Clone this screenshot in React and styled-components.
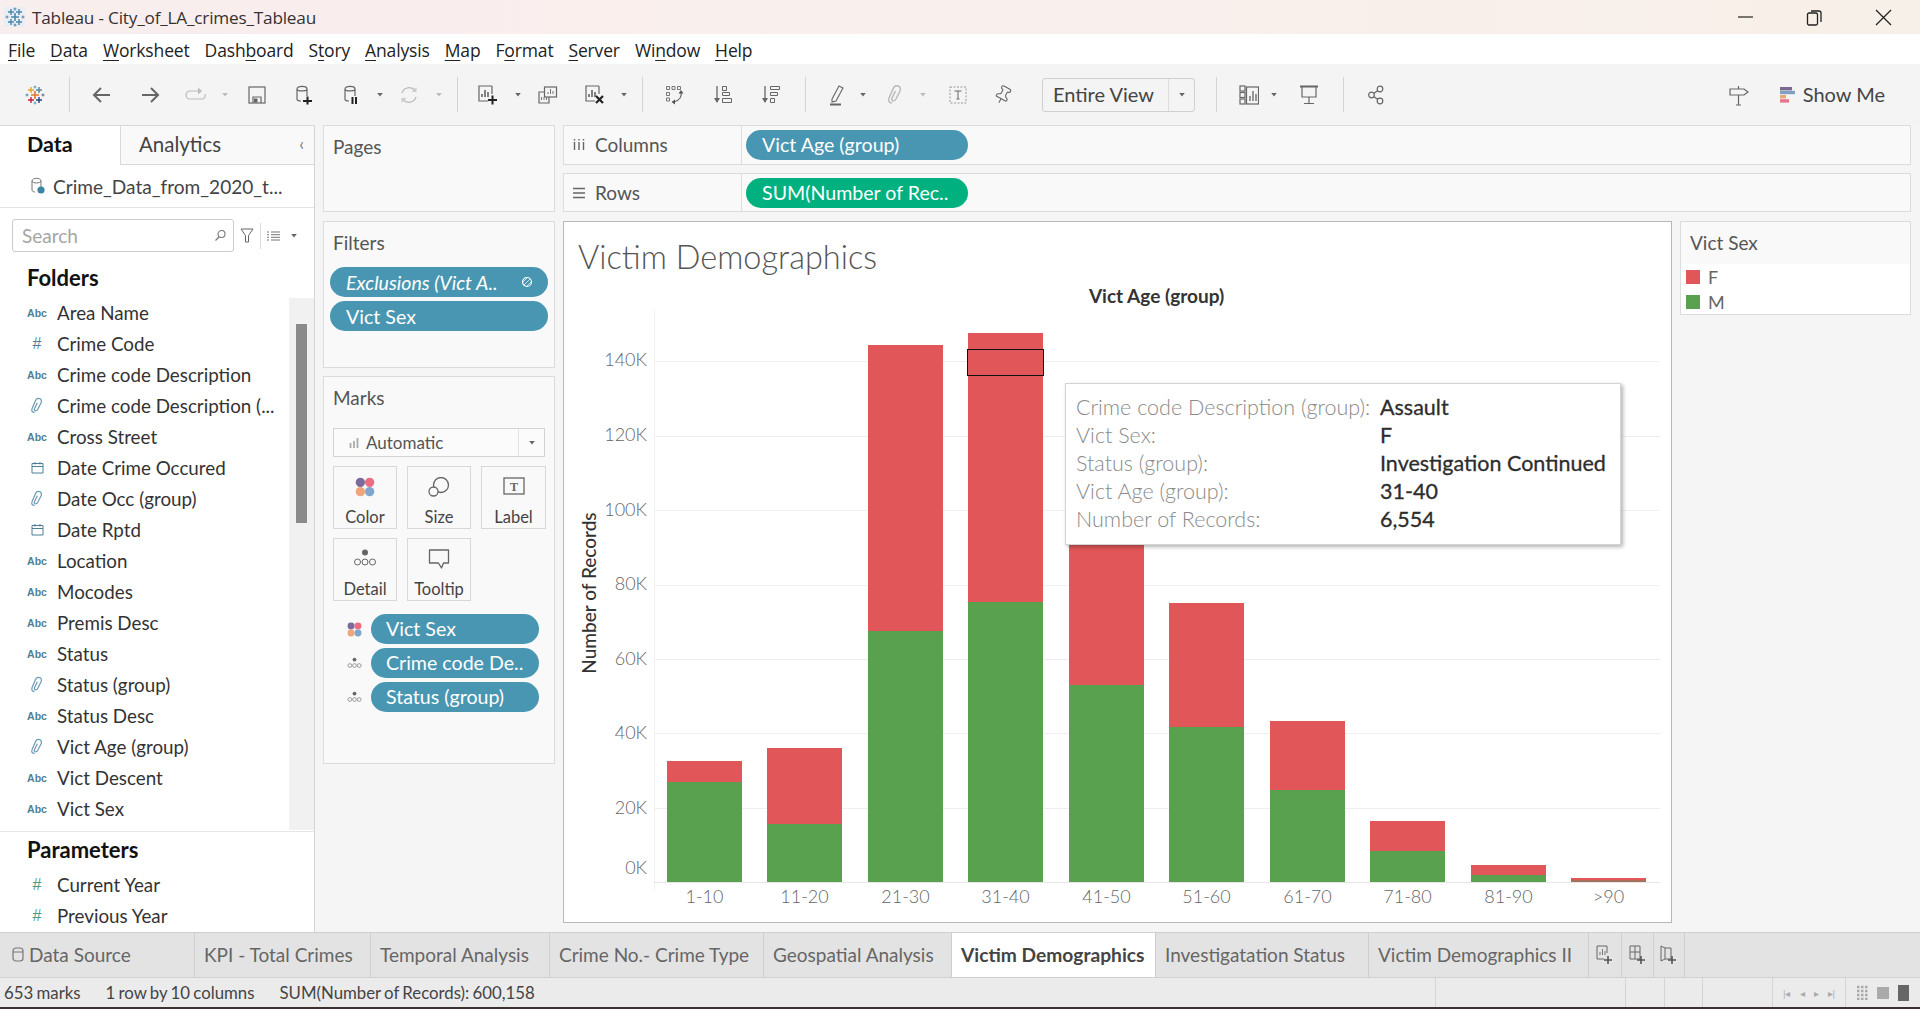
import styled, { createGlobalStyle } from "styled-components"
import { Pin } from "lucide-react"

const Global = createGlobalStyle`
    html, body { margin: 0; padding: 0; background: #f5f5f5; }
    * { box-sizing: border-box; }
    body { font-family: "Lato", "Noto Sans", sans-serif; overflow: hidden; }
`

const Page = styled.div`
    width: 1920px;
    height: 1009px;
    display: flex;
    flex-direction: column;
    overflow: hidden;
    position: relative;
`

/* title + menu */
const TitleBar = styled.div`
    height: 34px;
    display: flex;
    align-items: center;
    padding-left: 4px;
    background: linear-gradient(90deg, #f9eeee 0%, #f9efec 60%, #f7f0e8 100%);
    font-family: "Open Sans", sans-serif;
    font-size: 17.2px;
    color: #333;
`
const TitleText = styled.span`
    margin-left: 7px;
    letter-spacing: -0.2px;
`
const WindowButtons = styled.div`
    margin-left: auto;
    display: flex;
    padding-right: 28px;
    gap: 52px;
`
const MenuBar = styled.div`
    height: 30px;
    display: flex;
    align-items: center;
    gap: 15px;
    padding: 2px 0 0 8px;
    background: #fff;
    font-family: "Open Sans", sans-serif;
    font-size: 17.5px;
    letter-spacing: -0.15px;
    color: #222;
`
const MenuItem = styled.span`
    u { text-underline-offset: 3px; }
`

/* toolbar */
const Toolbar = styled.div`
    height: 61px;
    display: flex;
    align-items: center;
    background: #f4f4f4;
`
const ToolIcon = styled.div`
    width: 24px;
    height: 24px;
    flex: none;
    margin-left: ${p => p.$ml}px;
    display: flex;
    align-items: center;
    justify-content: center;
`
const Caret = styled.div`
    width: 8px;
    height: 4px;
    flex: none;
    margin-left: ${p => p.$ml}px;
    background: ${p => (p.$dim ? "#bbb" : "#666")};
    clip-path: polygon(10% 0, 90% 0, 50% 100%);
`
const ToolSep = styled.div`
    width: 1px;
    height: 35px;
    flex: none;
    margin-left: ${p => p.$ml}px;
    background: #d4d4d4;
`
const FitSelect = styled.div`
    width: 153px;
    height: 34px;
    flex: none;
    margin-left: ${p => p.$ml}px;
    border: 1px solid #d0d0d0;
    border-radius: 3px;
    display: flex;
    align-items: center;
    font-size: 20px;
    color: #444;
`
const FitLabel = styled.div`
    width: 126px;
    padding: 0 0 2px 10px;
    border-right: 1px solid #ddd;
    line-height: 30px;
`
const FitCaret = styled(Caret)`
    margin-left: 9px;
`
const ToolRight = styled.div`
    margin-left: auto;
    display: flex;
    align-items: center;
    padding-right: 35px;
`
const ShowMeMark = styled.div`
    margin-left: 31px;
    display: flex;
`
const ShowMeText = styled.span`
    margin-left: 8px;
    padding-bottom: 2px;
    font-size: 20px;
    color: #444;
`

/* workspace */
const Workspace = styled.div`
    height: 807px;
    display: flex;
    background: #f5f5f5;
`
const DataPane = styled.div`
    width: 315px;
    flex: none;
    background: #fff;
    border-right: 1px solid #d4d4d4;
    display: flex;
    flex-direction: column;
`
const PaneTabs = styled.div`
    height: 40px;
    display: flex;
    flex: none;
    border-top: 1px solid #d8d8d8;
`
const PaneTab = styled.div`
    width: ${p => p.$w}px;
    padding-left: ${p => p.$pad}px;
    line-height: 36px;
    font-size: ${p => (p.$active ? 21.5 : 20.5)}px;
    font-weight: ${p => (p.$active ? 700 : 400)};
    color: ${p => (p.$active ? "#111" : "#444")};
`
const AnalyticsTab = styled(PaneTab)`
    flex: 1;
    position: relative;
    background: #f9f9f9;
    border-left: 1px solid #d8d8d8;
    border-bottom: 1px solid #d8d8d8;
`
const Collapse = styled.span`
    position: absolute;
    right: 10px;
    top: 0;
    color: #777;
    font-size: 17px;
`
const SourceRow = styled.div`
    height: 43px;
    flex: none;
    display: flex;
    align-items: center;
    gap: 7px;
    padding-left: 31px;
    border-bottom: 1px solid #e4e4e4;
    font-size: 19.1px;
    color: #444;
`
const SearchRow = styled.div`
    height: 50px;
    flex: none;
    display: flex;
    align-items: flex-start;
    padding: 11px 0 0 12px;
`
const SearchBox = styled.div`
    width: 222px;
    height: 33px;
    border: 1px solid #ccc;
    border-radius: 3px;
    display: flex;
    align-items: center;
    justify-content: space-between;
    padding: 0 6px 0 9px;
    font-size: 19px;
    color: #a5a5a5;
`
const SearchTools = styled.div`
    display: flex;
    align-items: center;
    height: 33px;
    gap: 6px;
    padding-left: 6px;
`
const SearchDivider = styled.div`
    width: 1px;
    height: 26px;
    background: #ddd;
`
const SectionTitle = styled.div`
    height: ${p => p.$h}px;
    flex: none;
    padding-left: 27px;
    line-height: ${p => p.$lh}px;
    font-size: 22px;
    font-weight: 700;
    color: #111;
`
const FieldScroll = styled.div`
    height: 534px;
    flex: none;
    display: flex;
    border-bottom: 1px solid #e6e6e6;
`
const FieldList = styled.div`
    flex: 1;
`
const ScrollTrack = styled.div`
    width: 25px;
    height: 532px;
    background: #f1f1f1;
    padding: 26px 7px 0 7px;
`
const ScrollThumb = styled.div`
    width: 11px;
    height: 199px;
    background: #8a8a8a;
`
const FieldRow = styled.div`
    height: 31px;
    padding-bottom: 2px;
    display: flex;
    align-items: center;
    font-size: 18.8px;
    color: #333;
    white-space: nowrap;
`
const FieldIcon = styled.div`
    width: 57px;
    padding: 0 8px 0 25px;
    display: flex;
    justify-content: center;
    flex: none;
    color: ${p => (p.$param ? "#4a9a85" : "#4f7f97")};
    font-size: ${p => (p.$abc ? "10.5px" : "16px")};
    font-weight: ${p => (p.$abc ? 700 : 400)};
    font-family: "Liberation Sans", sans-serif;
`

/* shelf cards */
const CardColumn = styled.div`
    width: 232px;
    flex: none;
    margin-left: 8px;
    display: flex;
    flex-direction: column;
`
const Card = styled.div`
    height: ${p => p.$h}px;
    margin-bottom: ${p => p.$mb || 0}px;
    flex: none;
    background: #f9f9f9;
    border: 1px solid #dcdcdc;
    padding: 0 7px 0 9px;
`
const CardTitle = styled.div`
    font-size: 19px;
    color: #555;
    line-height: 24px;
    margin-top: ${p => p.$mt}px;
`
const PillStack = styled.div`
    display: flex;
    flex-direction: column;
    gap: 4px;
    margin: ${p => p.$m || "0"};
`
const Pill = styled.div`
    height: 30px;
    width: ${p => p.$w}px;
    flex: none;
    border-radius: 15px;
    background: ${p => p.$color || "#4996b2"};
    color: #fff;
    display: flex;
    align-items: center;
    justify-content: space-between;
    padding: 0 14px ${p => p.$drop ?? 2}px ${p => p.$pad || 16}px;
    font-size: 19.6px;
    font-style: ${p => (p.$italic ? "italic" : "normal")};
    white-space: nowrap;
`
const MarkType = styled.div`
    height: 29px;
    margin: 18px 0 9px 0;
    width: 212px;
    display: flex;
    align-items: center;
    background: #fbfbfb;
    border: 1px solid #d4d4d4;
    font-size: 17px;
    color: #555;
`
const MarkTypeLabel = styled.div`
    width: 185px;
    display: flex;
    align-items: center;
    gap: 5px;
    padding-left: 15px;
    height: 27px;
    border-right: 1px solid #e2e2e2;
`
const MarkTypeCaret = styled(Caret)`
    margin-left: 9px;
`
const MarkGrid = styled.div`
    display: grid;
    grid-template-columns: 64px 64px 65px;
    grid-auto-rows: 63px;
    column-gap: 10px;
    row-gap: 9px;
`
const MarkButton = styled.div`
    border: 1px solid #d8d8d8;
    display: flex;
    flex-direction: column;
    align-items: center;
    justify-content: space-between;
    padding: 10px 0 1px;
    font-size: 16.5px;
    color: #444;
    line-height: 20px;
`
const MarkField = styled.div`
    display: flex;
    align-items: center;
    padding-left: 13px;
    gap: 9px;
`
const MarkFieldIcon = styled.div`
    width: 16px;
    height: 16px;
    flex: none;
    display: flex;
    align-items: center;
    justify-content: center;
`

/* main */
const Main = styled.div`
    flex: 1;
    margin-left: 8px;
    margin-right: 9px;
    display: flex;
    flex-direction: column;
    gap: 8px;
    min-width: 0;
`
const Shelf = styled.div`
    height: ${p => p.$h}px;
    flex: none;
    display: flex;
    align-items: center;
    background: #f9f9f9;
    border: 1px solid #dcdcdc;
`
const ShelfLabel = styled.div`
    width: 178px;
    height: 100%;
    display: flex;
    align-items: center;
    gap: 10px;
    padding: 0 0 ${p => p.$drop ?? 2}px 9px;
    border-right: 1px solid #dcdcdc;
    font-size: 19px;
    color: #555;
    margin-right: 4px;
`
const ViewRow = styled.div`
    display: flex;
    align-items: flex-start;
    gap: 8px;
    margin-top: 1px;
`
const Viz = styled.div`
    width: 1109px;
    height: 702px;
    flex: none;
    background: #fff;
    border: 1px solid #b8b8b8;
    position: relative;
`
const VizTitle = styled.div`
    height: 58px;
    padding: 15px 0 0 14px;
    font-size: 32.5px;
    font-weight: 300;
    line-height: 40px;
    color: #555;
`
const AxisHeader = styled.div`
    height: 30px;
    padding: 1px 12px 0 90px;
    text-align: center;
    font-size: 19px;
    font-weight: 700;
    color: #333;
    line-height: 30px;
`
const ChartSvg = styled.svg`
    display: block;
    font-family: "Lato", sans-serif;
`
const Tip = styled.div`
    position: absolute;
    left: 501px;
    top: 161px;
    width: 556px;
    height: 162px;
    background: #fff;
    border: 1px solid #d4d4d4;
    box-shadow: 2px 2px 4px rgba(0, 0, 0, 0.3);
    padding: 9px 0 0 10px;
    display: grid;
    grid-template-columns: 304px 1fr;
    grid-auto-rows: 28px;
    align-items: center;
    font-size: 21.5px;
    white-space: nowrap;
`
const TipKey = styled.div`
    color: #8a8a8a;
    font-weight: 300;
`
const TipValue = styled.div`
    color: #2d2d2d;
    -webkit-text-stroke: 0.3px #2d2d2d;
`
const Legend = styled.div`
    flex: 1;
    height: 94px;
    background: #fff;
    border: 1px solid #dcdcdc;
`
const LegendHead = styled.div`
    height: 42px;
    padding-left: 9px;
    background: #f9f9f9;
    font-size: 19px;
    line-height: 42px;
    color: #555;
`
const LegendRow = styled.div`
    height: 25px;
    display: flex;
    align-items: center;
    padding-left: 5px;
    gap: 8px;
    font-size: 18px;
    color: #666;
`
const Swatch = styled.div`
    width: 14px;
    height: 14px;
    background: ${p => p.$color};
`

/* tabs & status */
const TabBar = styled.div`
    height: 46px;
    flex: none;
    display: flex;
    background: #e3e3e3;
    border-top: 1px solid #cfcfcf;
    border-bottom: 1px solid #d0d0d0;
`
const SheetTab = styled.div`
    width: ${p => p.$w}px;
    flex: none;
    display: flex;
    align-items: center;
    justify-content: ${p => (p.$icon ? "center" : "flex-start")};
    gap: 5px;
    padding-left: ${p => (p.$icon ? 0 : p.$pad || 9)}px;
    padding-bottom: ${p => (p.$icon ? 0 : 2)}px;
    border-right: 1px solid #cfcfcf;
    background: ${p => (p.$active ? "#fff" : "transparent")};
    color: ${p => (p.$active ? "#444" : "#666")};
    font-weight: ${p => (p.$active ? 700 : 400)};
    font-size: ${p => (p.$active ? 19.2 : 19)}px;
    white-space: nowrap;
`
const StatusBar = styled.div`
    height: 31px;
    flex: none;
    display: flex;
    background: #ebebeb;
    border-bottom: 2px solid #3b3230;
    font-size: 16.8px;
    word-spacing: -1px;
    color: #444;
`
const StatusText = styled.div`
    width: 1436px;
    display: flex;
    gap: 25px;
    align-items: center;
    padding-left: 4px;
    border-right: 1px solid #d4d4d4;
`
const StatusCell = styled.div`
    width: ${p => p.$w}px;
    flex: none;
    display: flex;
    align-items: center;
    justify-content: center;
    gap: 9px;
    border-right: ${p => (p.$last ? "none" : "1px solid #d4d4d4")};
`
const NavMark = styled.span`
    font-size: 10px;
    color: #aaa;
`
const ViewMark = styled.div`
    width: ${p => p.$s}px;
    height: ${p => p.$h}px;
    background: ${p => p.$color};
`
const TiltedPin = styled(Pin)`
    transform: rotate(28deg);
`

const ic = { fill: "none", stroke: "#666", strokeWidth: 1.2 }

const Cross = ({ x, y, s = 3, c, w = 1.4 }) => (
    <path d={`M${x - s} ${y}H${x + s}M${x} ${y - s}V${y + s}`} stroke={c} strokeWidth={w} fill="none" />
)

const TableauLogo = ({ mono }) => {
    const col = k => mono || k
    return (
        <svg width="20" height="20" viewBox="0 0 20 20">
            <Cross x={10} y={10} s={4} c={col("#e8762c")} w={1.6} />
            <Cross x={6} y={5} s={3} c={col("#e8a33c")} />
            <Cross x={14} y={5} s={3} c={col("#5b879b")} />
            <Cross x={6} y={15} s={3} c={col("#c72037")} />
            <Cross x={14} y={15} s={3} c={col("#1f447e")} />
            <Cross x={10} y={2} s={1.5} c={col("#7199a6")} w={1} />
            <Cross x={10} y={18} s={1.5} c={col("#7199a6")} w={1} />
            <Cross x={2} y={10} s={1.5} c={col("#59879b")} w={1} />
            <Cross x={18} y={10} s={1.5} c={col("#5b6591")} w={1} />
        </svg>
    )
}
const ArrowLeft = () => (
    <svg width="22" height="22" viewBox="0 0 22 22"><path d="M19 11H4M10 4l-7 7 7 7" fill="none" stroke="#666" strokeWidth="2" /></svg>
)
const ArrowRight = () => (
    <svg width="22" height="22" viewBox="0 0 22 22"><path d="M3 11h15M12 4l7 7-7 7" fill="none" stroke="#666" strokeWidth="2" /></svg>
)
const RunFlow = () => (
    <svg width="22" height="18" viewBox="0 0 22 18"><path d="M13 5H5a3.5 3.5 0 0 0 0 8h12a3.5 3.5 0 0 0 3-5" fill="none" stroke="#bbb" strokeWidth="1.2" /><path d="M13 1.5l4 3.5-4 3.5z" fill="#bbb" /></svg>
)
const Save = () => (
    <svg width="18" height="18" viewBox="0 0 18 18"><rect x="1" y="1" width="16" height="16" {...ic} /><path d="M5 17v-6h8v6" {...ic} /><rect x="6" y="12.5" width="3.5" height="4" fill="#666" /></svg>
)
const DbBase = () => (
    <path d="M2 4c0-3.6 10-3.6 10 0v7M2 4c0 2.6 10 2.6 10 0M2 4v10c0 1.6 2 2 4 2" {...ic} />
)
const DbPlus = () => (
    <svg width="18" height="20" viewBox="0 0 18 20"><DbBase /><path d="M8 16h9M12.5 11.5v8" stroke="#222" strokeWidth="2" /></svg>
)
const DbPause = () => (
    <svg width="18" height="20" viewBox="0 0 18 20"><DbBase /><path d="M9.5 12v7M13 12v7" stroke="#222" strokeWidth="2" /></svg>
)
const Refresh = () => (
    <svg width="20" height="20" viewBox="0 0 20 20"><path d="M3 8a7.5 7.5 0 0 1 13-2.5M17 12a7.5 7.5 0 0 1-13 2.5" fill="none" stroke="#bbb" strokeWidth="1.2" /><path d="M17.5 2v5h-5zM2.5 18v-5h5z" fill="#ccc" /></svg>
)
const NewSheet = () => (
    <svg width="20" height="20" viewBox="0 0 20 20"><path d="M14 1H1v15h9M14 1v8" {...ic} /><path d="M4 12V9M7 12V5M10 12V7" stroke="#666" strokeWidth="1.6" /><path d="M10 15h9M14.5 10.5v9" stroke="#222" strokeWidth="2" /></svg>
)
const DupSheet = () => (
    <svg width="20" height="18" viewBox="0 0 20 18"><rect x="6.5" y="1" width="12" height="10" {...ic} fill="#f4f4f4" /><path d="M6 6H1v11h10v-6" {...ic} /><path d="M10 8V6M12.5 8V3M15 8V5M3.5 14v-3M6 14v-3M8.5 14v-3" stroke="#777" strokeWidth="1" /></svg>
)
const ClearSheet = () => (
    <svg width="20" height="20" viewBox="0 0 20 20"><path d="M14 1H1v15h9M14 1v8" {...ic} /><path d="M4 12V9M7 12V5M10 12V7" stroke="#666" strokeWidth="1.6" /><path d="M11 11l7 7M18 11l-7 7" stroke="#222" strokeWidth="2.2" /></svg>
)
const Swap = () => (
    <svg width="20" height="20" viewBox="0 0 20 20"><path d="M1.5 1.5h3v3h-3zM7 1.5h3v3H7zM12.5 1.5h3v3h-3zM1.5 7.5h3v3h-3zM1.5 13h3v3h-3z" fill="none" stroke="#777" /><path d="M16 7c1 4-1 8-7 10" fill="none" stroke="#666" strokeWidth="1.2" /><path d="M13.5 8.5L16 5l2.5 3.5zM10 14.5L6.5 17l3.5 2.5z" fill="#555" /></svg>
)
const SortAsc = () => (
    <svg width="20" height="20" viewBox="0 0 20 20"><path d="M4 1v14" stroke="#666" strokeWidth="1.3" /><path d="M1 13h6l-3 5z" fill="#666" /><path d="M9.5 1.5h4v4h-4zM9.5 7.5h7v3h-7zM9.5 13.5h9v4h-9z" fill="none" stroke="#666" /></svg>
)
const SortDesc = () => (
    <svg width="20" height="20" viewBox="0 0 20 20"><path d="M4 1v14" stroke="#666" strokeWidth="1.3" /><path d="M1 13h6l-3 5z" fill="#666" /><path d="M9.5 1.5h9v3h-9zM9.5 7.5h7v3h-7zM9.5 13.5h4v4h-4z" fill="none" stroke="#666" /></svg>
)
const Highlighter = () => (
    <svg width="18" height="22" viewBox="0 0 18 22"><path d="M3 15L10 2l4 2-7 13-4 1z" fill="none" stroke="#666" strokeWidth="1.1" /><path d="M1 20.5h11" stroke="#666" strokeWidth="2" /></svg>
)
const Clip = ({ c = "#bbb", s = 22 }) => (
    <svg width={s} height={s} viewBox="0 0 22 22"><path d="M8 19c-3 0-4-2-3-5l4-9c1-3 3-3.5 5-3s3 2 2 5l-4 8c-1 2-2 2-3 2s-1.5-1.5-1-3l3.5-7" fill="none" stroke={c} strokeWidth="1.5" /></svg>
)
const TextBox = () => (
    <svg width="18" height="18" viewBox="0 0 18 18"><rect x="1" y="1" width="16" height="16" fill="none" stroke="#999" strokeDasharray="2 1.5" /><path d="M5.5 5h7M9 5v8M7.5 13h3" stroke="#666" fill="none" /></svg>
)
const ShowMeIcon = () => (
    <svg width="20" height="20" viewBox="0 0 20 20"><rect x="1" y="1" width="5" height="5" {...ic} /><rect x="1" y="7.5" width="5" height="5" {...ic} /><rect x="1" y="14" width="5" height="5" {...ic} /><rect x="7.5" y="2" width="12" height="17" {...ic} /><path d="M11 16v-5M14 16V6M17 16v-7" stroke="#666" strokeWidth="1.3" /></svg>
)
const Board = () => (
    <svg width="18" height="20" viewBox="0 0 18 20"><path d="M0 1.5h18" stroke="#666" strokeWidth="2" /><path d="M2 2v10h14V2M9 12v6M4 18.5h10" {...ic} /></svg>
)
const Share = () => (
    <svg width="16" height="20" viewBox="0 0 16 20"><circle cx="12" cy="4" r="2.8" {...ic} /><circle cx="3.5" cy="10" r="2.8" {...ic} /><circle cx="12" cy="16" r="2.8" {...ic} /><path d="M6 8.3l3.6-2.6M6 11.7l3.6 2.6" {...ic} /></svg>
)
const Signpost = () => (
    <svg width="20" height="22" viewBox="0 0 20 22"><path d="M1 5h14l4 3-4 3H1zM9.5 2v3M9.5 11v10M7 21h5" {...ic} /></svg>
)
const ShowMeBars = () => (
    <svg width="15" height="16" viewBox="0 0 15 16"><rect width="12" height="3.4" fill="#7a6a92" /><rect y="3.8" width="15" height="3.4" fill="#7f9fc4" /><rect y="8" width="6" height="3.4" fill="#e9a776" /><rect y="12.2" width="9" height="3.4" fill="#e9748a" /></svg>
)
const Minimize = () => <svg width="17" height="17" viewBox="0 0 17 17"><path d="M1 8h15" stroke="#222" strokeWidth="1.2" /></svg>
const Restore = () => <svg width="17" height="17" viewBox="0 0 17 17"><rect x="1.5" y="4" width="10" height="12" rx="1.5" fill="none" stroke="#222" strokeWidth="1.3" /><path d="M5 2h8a2 2 0 0 1 2 2v9" fill="none" stroke="#222" strokeWidth="1.3" /></svg>
const Close = () => <svg width="17" height="17" viewBox="0 0 17 17"><path d="M1 1l15 15M16 1L1 16" stroke="#222" strokeWidth="1.3" /></svg>
const Calendar = () => <svg width="13" height="13" viewBox="0 0 13 13"><path d="M1 2.5h11V12H1zM1 5.5h11M4 1v2.5M9 1v2.5" fill="none" stroke="#4f7f97" /></svg>
const MagGlass = () => <svg width="13" height="13" viewBox="0 0 13 13"><circle cx="7.5" cy="5" r="3.5" fill="none" stroke="#777" strokeWidth="1.1" /><path d="M5 8L1.5 11.5" stroke="#777" strokeWidth="1.3" /></svg>
const FunnelIcon = () => <svg width="14" height="15" viewBox="0 0 14 15"><path d="M1 1h12L8.5 7.5V14h-3V7.5z" fill="none" stroke="#666" /></svg>
const ListIcon = () => <svg width="13" height="10" viewBox="0 0 13 10"><path d="M0 1h2M4 1h9M0 3.7h2M4 3.7h9M0 6.3h2M4 6.3h9M0 9h2M4 9h9" stroke="#777" /></svg>
const DbCheck = () => <svg width="15" height="18" viewBox="0 0 15 18"><path d="M1 4c0-3.6 9-3.6 9 0v6M1 4c0 2.6 9 2.6 9 0M1 4v9c0 1.5 2 2 3 2" fill="none" stroke="#777" /><circle cx="10" cy="13" r="3.6" fill="#3d83a6" /></svg>
const ExcludeMark = () => <svg width="14" height="14" viewBox="0 0 14 14"><circle cx="7" cy="7" r="4.5" fill="none" stroke="#fff" strokeWidth="1.1" /><path d="M4 10l6-6M2.5 7.5l5-5M6.5 11.5l5-5" stroke="#fff" strokeWidth="0.7" /></svg>
const MiniBars = () => <svg width="12" height="10" viewBox="0 0 12 10"><path d="M1.5 10V5M5 10V3M8.5 10V0" stroke="#aaa" strokeWidth="1.8" /></svg>
const ColorDots = ({ s = 20 }) => (
    <svg width={s} height={s} viewBox="0 0 28 28">
        <circle cx="7.5" cy="7.5" r="6.5" fill="#7b6a9a" /><circle cx="20.5" cy="7.5" r="6.5" fill="#ee6b82" />
        <circle cx="7.5" cy="20.5" r="6.5" fill="#f0a47a" /><circle cx="20.5" cy="20.5" r="6.5" fill="#7fa6cd" />
    </svg>
)
const SizeCircles = () => <svg width="22" height="20" viewBox="0 0 22 20"><circle cx="13" cy="8" r="7.5" fill="none" stroke="#666" strokeWidth="1.3" /><circle cx="5.5" cy="14.500" r="4.500" fill="#f9f9f9" stroke="#666" strokeWidth="1.3" /></svg>
const LabelT = () => <svg width="22" height="18" viewBox="0 0 22 18"><rect x="1" y="1" width="20" height="16" fill="none" stroke="#666" strokeWidth="1.3" /><text x="11" y="14" textAnchor="middle" fontFamily="Liberation Serif, serif" fontWeight="700" fontSize="12" fill="#666">T</text></svg>
const DetailDots = ({ w = 24, h = 18 }) => (
    <svg width={w} height={h} viewBox="0 0 24 18"><circle cx="12" cy="3.5" r="3" fill="#666" /><circle cx="4.5" cy="13" r="3" fill="none" stroke="#666" /><circle cx="12" cy="13" r="3" fill="none" stroke="#666" /><circle cx="19.5" cy="13" r="3" fill="none" stroke="#666" /></svg>
)
const TooltipBubble = () => <svg width="22" height="20" viewBox="0 0 22 20"><path d="M1.500 1h19v13h-5l-2 5-3-5h-9z" fill="none" stroke="#666" strokeWidth="1.3" strokeLinejoin="round" /></svg>
const SheetPlus = () => <svg width="18" height="20" viewBox="0 0 18 20"><path d="M11 1H1v13h7M11 1v7" fill="none" stroke="#666" /><path d="M4 10V7M6.5 10V4M9 10V6" stroke="#777" /><path d="M8 15h8M12 11v8" stroke="#555" strokeWidth="1.6" /></svg>
const BoardPlus = () => <svg width="18" height="20" viewBox="0 0 18 20"><path d="M1 1h10v13H1zM1 7h10M6 1v13" fill="none" stroke="#666" /><path d="M8 15h8M12 11v8" stroke="#555" strokeWidth="1.6" /></svg>
const StoryPlus = () => <svg width="18" height="20" viewBox="0 0 18 20"><path d="M1 1l4 2h6v11H5l-4 2zM5 3v11" fill="none" stroke="#666" /><path d="M8 15h8M12 11v8" stroke="#555" strokeWidth="1.6" /></svg>
const TabDb = () => <svg width="12" height="15" viewBox="0 0 12 15"><rect x="1" y="1" width="10" height="13" rx="3" fill="none" stroke="#777" strokeWidth="1.2" /><path d="M1 5h10" stroke="#777" /></svg>
const GridDots = () => <svg width="11" height="15" viewBox="0 0 11 15"><path d="M0 2h11M0 6h11M0 10h11M0 14h11" stroke="#aaa" strokeWidth="2.4" strokeDasharray="2.5 1.5" /></svg>
const ShelfColumnsIcon = () => <svg width="12" height="12" viewBox="0 0 12 12"><path d="M1.5 4v8M6 4v8M10.5 4v8" stroke="#666" strokeWidth="1.4" /><path d="M1.5 1v1.5M6 1v1.5M10.5 1v1.5" stroke="#666" strokeWidth="1.4" /></svg>
const ShelfRowsIcon = () => <svg width="12" height="12" viewBox="0 0 12 12"><path d="M0 1.5h12M0 6h12M0 10.5h12" stroke="#666" strokeWidth="1.4" /></svg>

const RED = "#e15759"
const GREEN = "#59a14f"

const folderFields = [
    ["abc", "Area Name"], ["num", "Crime Code"], ["abc", "Crime code Description"],
    ["clip", "Crime code Description (..."], ["abc", "Cross Street"], ["date", "Date Crime Occured"],
    ["clip", "Date Occ (group)"], ["date", "Date Rptd"], ["abc", "Location"], ["abc", "Mocodes"],
    ["abc", "Premis Desc"], ["abc", "Status"], ["clip", "Status (group)"], ["abc", "Status Desc"],
    ["clip", "Vict Age (group)"], ["abc", "Vict Descent"], ["abc", "Vict Sex"],
]

const bars = [
    { label: "1-10", x: 667, top: 761, split: 782 },
    { label: "11-20", x: 767, top: 748, split: 824 },
    { label: "21-30", x: 868, top: 345, split: 631 },
    { label: "31-40", x: 968, top: 333, split: 602 },
    { label: "41-50", x: 1069, top: 400, split: 685 },
    { label: "51-60", x: 1169, top: 603, split: 727 },
    { label: "61-70", x: 1270, top: 721, split: 790 },
    { label: "71-80", x: 1370, top: 821, split: 851 },
    { label: "81-90", x: 1471, top: 865, split: 875 },
    { label: ">90", x: 1571, top: 878, split: 880 },
]
const gridLines = [808, 733, 659, 585, 510, 436, 361]
const yTicks = [["0K", 870], ["20K", 810], ["40K", 735], ["60K", 661], ["80K", 586], ["100K", 512], ["120K", 437], ["140K", 362]]

const Field = ({ kind, name, param }) => (
    <FieldRow>
        <FieldIcon $abc={kind === "abc"} $param={param}>
            {kind === "abc" && "Abc"}
            {kind === "num" && "#"}
            {kind === "clip" && <Clip c="#6d9cb3" s={18} />}
            {kind === "date" && <Calendar />}
        </FieldIcon>
        {name}
    </FieldRow>
)

const Menu = ({ pre, u, post }) => (
    <MenuItem>{pre}<u>{u}</u>{post}</MenuItem>
)

const App = () => {
    return (
        <Page>
            <Global />
            <TitleBar>
                <svg width="21" height="20" viewBox="0 0 21 20"><rect width="21" height="20" fill="#e8eef4" /><g transform="translate(1 0)"><TableauLogo mono="#4f86a8" /></g></svg>
                <TitleText>Tableau - City_of_LA_crimes_Tableau</TitleText>
                <WindowButtons><Minimize /><Restore /><Close /></WindowButtons>
            </TitleBar>
            <MenuBar>
                <Menu u="F" post="ile" />
                <Menu u="D" post="ata" />
                <Menu u="W" post="orksheet" />
                <Menu pre="Dash" u="b" post="oard" />
                <Menu pre="S" u="t" post="ory" />
                <Menu u="A" post="nalysis" />
                <Menu u="M" post="ap" />
                <Menu pre="F" u="o" post="rmat" />
                <Menu u="S" post="erver" />
                <Menu pre="Wi" u="n" post="dow" />
                <Menu u="H" post="elp" />
            </MenuBar>
            <Toolbar>
                <ToolIcon $ml={23}><TableauLogo /></ToolIcon>
                <ToolSep $ml={22} />
                <ToolIcon $ml={20}><ArrowLeft /></ToolIcon>
                <ToolIcon $ml={24}><ArrowRight /></ToolIcon>
                <ToolIcon $ml={22}><RunFlow /></ToolIcon>
                <Caret $ml={13} $dim />
                <ToolIcon $ml={16}><Save /></ToolIcon>
                <ToolIcon $ml={23}><DbPlus /></ToolIcon>
                <ToolIcon $ml={24}><DbPause /></ToolIcon>
                <Caret $ml={12} />
                <ToolIcon $ml={13}><Refresh /></ToolIcon>
                <Caret $ml={14} $dim />
                <ToolSep $ml={14} />
                <ToolIcon $ml={18}><NewSheet /></ToolIcon>
                <Caret $ml={14} />
                <ToolIcon $ml={14}><DupSheet /></ToolIcon>
                <ToolIcon $ml={23}><ClearSheet /></ToolIcon>
                <Caret $ml={13} />
                <ToolSep $ml={14} />
                <ToolIcon $ml={20}><Swap /></ToolIcon>
                <ToolIcon $ml={24}><SortAsc /></ToolIcon>
                <ToolIcon $ml={24}><SortDesc /></ToolIcon>
                <ToolSep $ml={22} />
                <ToolIcon $ml={20}><Highlighter /></ToolIcon>
                <Caret $ml={9} />
                <ToolIcon $ml={16}><Clip /></ToolIcon>
                <Caret $ml={12} $dim />
                <ToolIcon $ml={19}><TextBox /></ToolIcon>
                <ToolIcon $ml={21}><TiltedPin size={20} strokeWidth={1.3} color="#666" /></ToolIcon>
                <FitSelect $ml={27}>
                    <FitLabel>Entire View</FitLabel>
                    <FitCaret />
                </FitSelect>
                <ToolSep $ml={21} />
                <ToolIcon $ml={20}><ShowMeIcon /></ToolIcon>
                <Caret $ml={9} />
                <ToolIcon $ml={19}><Board /></ToolIcon>
                <ToolSep $ml={22} />
                <ToolIcon $ml={20}><Share /></ToolIcon>
                <ToolRight>
                    <Signpost />
                    <ShowMeMark><ShowMeBars /></ShowMeMark>
                    <ShowMeText>Show Me</ShowMeText>
                </ToolRight>
            </Toolbar>

            <Workspace>
                <DataPane>
                    <PaneTabs>
                        <PaneTab $w={120} $pad={27} $active>Data</PaneTab>
                        <AnalyticsTab $pad={18}>Analytics<Collapse>‹</Collapse></AnalyticsTab>
                    </PaneTabs>
                    <SourceRow><DbCheck />Crime_Data_from_2020_t...</SourceRow>
                    <SearchRow>
                        <SearchBox>Search<MagGlass /></SearchBox>
                        <SearchTools><FunnelIcon /><SearchDivider /><ListIcon /><Caret $ml={4} /></SearchTools>
                    </SearchRow>
                    <SectionTitle $h={40} $lh={39}>Folders</SectionTitle>
                    <FieldScroll>
                        <FieldList>
                            {folderFields.map(f => <Field key={f[1]} kind={f[0]} name={f[1]} />)}
                        </FieldList>
                        <ScrollTrack><ScrollThumb /></ScrollTrack>
                    </FieldScroll>
                    <SectionTitle $h={38} $lh={36}>Parameters</SectionTitle>
                    <Field kind="num" name="Current Year" param />
                    <Field kind="num" name="Previous Year" param />
                </DataPane>

                <CardColumn>
                    <Card $h={87} $mb={9}>
                        <CardTitle $mt={9}>Pages</CardTitle>
                    </Card>
                    <Card $h={147} $mb={8}>
                        <CardTitle $mt={9}>Filters</CardTitle>
                        <PillStack $m="12px 0 0 -3px">
                            <Pill $italic $w={218} $drop={0}>Exclusions (Vict A..<ExcludeMark /></Pill>
                            <Pill $w={218} $drop={0}>Vict Sex</Pill>
                        </PillStack>
                    </Card>
                    <Card $h={388}>
                        <CardTitle $mt={9}>Marks</CardTitle>
                        <MarkType>
                            <MarkTypeLabel><MiniBars />Automatic</MarkTypeLabel>
                            <MarkTypeCaret />
                        </MarkType>
                        <MarkGrid>
                            <MarkButton><ColorDots />Color</MarkButton>
                            <MarkButton><SizeCircles />Size</MarkButton>
                            <MarkButton><LabelT />Label</MarkButton>
                            <MarkButton><DetailDots />Detail</MarkButton>
                            <MarkButton><TooltipBubble />Tooltip</MarkButton>
                        </MarkGrid>
                        <PillStack $m="13px 0 0 0">
                            <MarkField><MarkFieldIcon><ColorDots s={15} /></MarkFieldIcon><Pill $w={168} $pad={15}>Vict Sex</Pill></MarkField>
                            <MarkField><MarkFieldIcon><DetailDots w={15} h={12} /></MarkFieldIcon><Pill $w={168} $pad={15}>Crime code De..</Pill></MarkField>
                            <MarkField><MarkFieldIcon><DetailDots w={15} h={12} /></MarkFieldIcon><Pill $w={168} $pad={15}>Status (group)</Pill></MarkField>
                        </PillStack>
                    </Card>
                </CardColumn>

                <Main>
                    <Shelf $h={40}>
                        <ShelfLabel><ShelfColumnsIcon />Columns</ShelfLabel>
                        <Pill $w={222}>Vict Age (group)</Pill>
                    </Shelf>
                    <Shelf $h={39}>
                        <ShelfLabel $drop={0}><ShelfRowsIcon />Rows</ShelfLabel>
                        <Pill $w={222} $drop={0} $color="#00b180">SUM(Number of Rec..</Pill>
                    </Shelf>
                    <ViewRow>
                        <Viz>
                            <VizTitle>Victim Demographics</VizTitle>
                            <AxisHeader>Vict Age (group)</AxisHeader>
                            <ChartSvg width="1107" height="612" viewBox="564 310 1107 612">
                                <path d="M654.5 310V890" stroke="#f2f2f2" />
                                {gridLines.map(y => <path key={y} d={`M654 ${y}.5H1660`} stroke="#efefef" />)}
                                <path d="M654 882.5H1660" stroke="#e6e6e6" />
                                {yTicks.map(([t, y]) => (
                                    <text key={t} x="647" y={y} textAnchor="end" dominantBaseline="middle" fontSize="18" fontWeight="300" fill="#666">{t}</text>
                                ))}
                                <text transform="translate(596 593) rotate(-90)" textAnchor="middle" fontSize="19" fontWeight="500" fill="#333">Number of Records</text>
                                {bars.map(b => (
                                    <g key={b.label}>
                                        <rect x={b.x} y={b.top} width="75" height={b.split - b.top} fill={RED} />
                                        <rect x={b.x} y={b.split} width="75" height={882 - b.split} fill={b.label === ">90" ? "#a5705c" : GREEN} />
                                        <text x={b.x + 37.5} y="899" textAnchor="middle" dominantBaseline="middle" fontSize="18" fontWeight="300" fill="#666">{b.label}</text>
                                    </g>
                                ))}
                                <rect x="967.5" y="349.5" width="76" height="26" fill="none" stroke="#111" strokeWidth="1" />
                            </ChartSvg>
                            <Tip>
                                <TipKey>Crime code Description (group):</TipKey><TipValue>Assault</TipValue>
                                <TipKey>Vict Sex:</TipKey><TipValue>F</TipValue>
                                <TipKey>Status (group):</TipKey><TipValue>Investigation Continued</TipValue>
                                <TipKey>Vict Age (group):</TipKey><TipValue>31-40</TipValue>
                                <TipKey>Number of Records:</TipKey><TipValue>6,554</TipValue>
                            </Tip>
                        </Viz>
                        <Legend>
                            <LegendHead>Vict Sex</LegendHead>
                            <LegendRow><Swatch $color={RED} />F</LegendRow>
                            <LegendRow><Swatch $color={GREEN} />M</LegendRow>
                        </Legend>
                    </ViewRow>
                </Main>
            </Workspace>

            <TabBar>
                <SheetTab $w={195} $pad={12}><TabDb />Data Source</SheetTab>
                <SheetTab $w={176}>KPI - Total Crimes</SheetTab>
                <SheetTab $w={179}>Temporal Analysis</SheetTab>
                <SheetTab $w={214}>Crime No.- Crime Type</SheetTab>
                <SheetTab $w={188}>Geospatial Analysis</SheetTab>
                <SheetTab $w={204} $active>Victim Demographics</SheetTab>
                <SheetTab $w={213}>Investigatation Status</SheetTab>
                <SheetTab $w={220}>Victim Demographics II</SheetTab>
                <SheetTab $w={33} $icon><SheetPlus /></SheetTab>
                <SheetTab $w={32} $icon><BoardPlus /></SheetTab>
                <SheetTab $w={31} $icon><StoryPlus /></SheetTab>
            </TabBar>
            <StatusBar>
                <StatusText>
                    <span>653 marks</span>
                    <span>1 row by 10 columns</span>
                    <span>SUM(Number of Records): 600,158</span>
                </StatusText>
                <StatusCell $w={190} />
                <StatusCell $w={39} />
                <StatusCell $w={38} />
                <StatusCell $w={70} />
                <StatusCell $w={73}>
                    <NavMark>|◂</NavMark><NavMark>◂</NavMark><NavMark>▸</NavMark><NavMark>▸|</NavMark>
                </StatusCell>
                <StatusCell $w={74} $last>
                    <GridDots />
                    <ViewMark $s={12} $h={12} $color="#aaa" />
                    <ViewMark $s={11} $h={16} $color="#666" />
                </StatusCell>
            </StatusBar>
        </Page>
    )
}

export default App
